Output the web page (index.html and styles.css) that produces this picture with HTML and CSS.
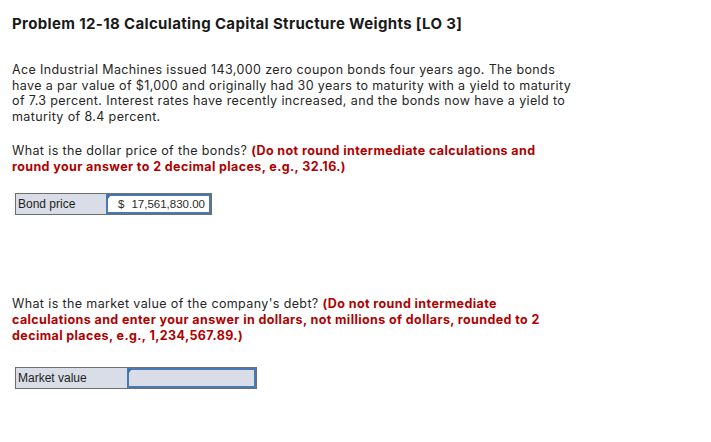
FILE: index.html
```html
<!DOCTYPE html>
<html>
<head>
<meta charset="utf-8">
<link rel="stylesheet" href="styles.css">
</head>
<body>
<div class="page">
  <h1 class="title">Problem 12-18 Calculating Capital Structure Weights [LO 3]</h1>
  <p class="text">Ace Industrial Machines issued 143,000 zero coupon bonds four years ago. The bonds<br>have a par value of $1,000 and originally had 30 years to maturity with a yield to maturity<br>of 7.3 percent. Interest rates have recently increased, and the bonds now have a yield to<br>maturity of 8.4 percent.</p>
  <p class="text q1">What is the dollar price of the bonds? <strong class="hint">(Do not round intermediate calculations and<br>round your answer to 2 decimal places, e.g., 32.16.)</strong></p>
  <div class="answer a1">
    <div class="label l1">Bond price</div>
    <div class="input i1"><span class="corner"></span><span class="dollar">$</span><span class="val">17,561,830.00</span></div>
  </div>
  <p class="text q2">What is the market value of the company's debt? <strong class="hint">(Do not round intermediate<br>calculations and enter your answer in dollars, not millions of dollars, rounded to 2<br>decimal places, e.g., 1,234,567.89.)</strong></p>
  <div class="answer a2">
    <div class="label l2">Market value</div>
    <div class="input i2"><span class="corner"></span></div>
  </div>
</div>
</body>
</html>
```
FILE: styles.css
```css
html, body { margin: 0; padding: 0; background: #fff; }
.page {
  padding: 14px 12px 0 12px;
  font-family: Inter, "Open Sans", sans-serif;
  color: #262626;
}
.title {
  margin: 0;
  font-size: 15px;
  line-height: 20px;
  font-weight: 700;
  letter-spacing: 0.35px;
  color: #1a1a1a;
  white-space: nowrap;
}
.text {
  margin: 0;
  font-size: 12.5px;
  line-height: 15.7px;
  letter-spacing: 0.38px;
  white-space: nowrap;
}
.title + .text { margin-top: 28px; }
.q1 { margin-top: 18px; }
.hint { color: #b00000; font-weight: 700; letter-spacing: 0.4px; }
.answer {
  display: flex;
  width: max-content;
  margin-left: 3px;
  border: 1px solid #6e6e6e;
  font-family: "Liberation Sans", Arial, sans-serif;
  font-size: 12px;
}
.a1 { margin-top: 19px; }
.q2 { margin-top: 81px; }
.a2 { margin-top: 24px; }
.label {
  box-sizing: border-box;
  height: 20px;
  background: #d9dde7;
  padding: 3px 0 0 2px;
  color: #1d1d1d;
}
.l1 { width: 90px; }
.l2 { width: 111px; }
.input {
  position: relative;
  box-sizing: border-box;
  height: 20px;
  border: 2px solid #4a78b3;
  display: flex;
  align-items: center;
}
.i1 { width: 105px; background: #fff; padding: 0 0 0 10px; gap: 7px; font-size: 11.5px; }
.i2 { width: 129px; background: #d9dde7; }
.corner {
  position: absolute;
  left: -1px;
  top: -1px;
  width: 0;
  height: 0;
  border-top: 5px solid #3b6fb0;
  border-right: 4px solid transparent;
}
.dollar, .val { color: #2b2b2b; white-space: nowrap; }
```
